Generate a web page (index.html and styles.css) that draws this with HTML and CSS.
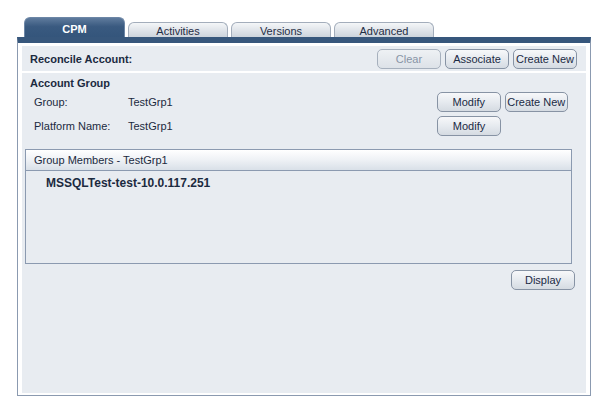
FILE: index.html
```html
<!DOCTYPE html>
<html lang="en">
<head>
  <meta charset="UTF-8" />
  <title>CPM</title>
  <link rel="stylesheet" href="styles.css">
</head>
<body>
  <div class="tabs">
    <div class="tab active">CPM</div>
    <div class="tab">Activities</div>
    <div class="tab">Versions</div>
    <div class="tab">Advanced</div>
  </div>

  <div class="frame">
    <!-- Reconcile row -->
    <div class="reconcile">
      <span class="title">Reconcile Account:</span>
      <div class="btns">
        <button class="btn" disabled>Clear</button>
        <button class="btn">Associate</button>
        <button class="btn">Create New</button>
      </div>
    </div>

    <!-- Account group -->
    <div class="group-panel">
      <div class="title">Account Group</div>
      <div class="field">
        <span class="label">Group:</span>
        <span class="value">TestGrp1</span>
        <div class="field-btns">
          <button class="btn">Modify</button>
          <button class="btn">Create New</button>
        </div>
      </div>
      <div class="field">
        <span class="label">Platform Name:</span>
        <span class="value">TestGrp1</span>
        <div class="field-btns">
          <button class="btn">Modify</button>
        </div>
      </div>

      <div class="members">
        <div class="members-head">Group Members - TestGrp1</div>
        <div class="members-body">
          <div class="member">MSSQLTest-test-10.0.117.251</div>
        </div>
      </div>

      <div class="display-row">
        <button class="btn">Display</button>
      </div>
    </div>
  </div>
</body>
</html>
```

FILE: styles.css
```css
body {
  margin: 0;
  background: #fff;
  font-family: "Liberation Sans", Arial, sans-serif;
  font-size: 11px;
  color: #1b2a40;
}
.tabs {
  display: flex;
  align-items: flex-end;
  gap: 3px;
  padding: 17px 0 0 24px;
  height: 20px;
}
.tab {
  width: 98px;
  height: 14px;
  line-height: 17px;
  text-align: center;
  border: 1px solid #a3adbb;
  border-bottom: none;
  border-radius: 6px 6px 0 0;
  background: linear-gradient(#f4f6f8, #cdd4dc);
  color: #1f2d44;
}
.tab.active {
  width: 99px;
  height: 19px;
  line-height: 23px;
  border-color: #6c86a6;
  background: linear-gradient(#5f7b9d, #3a5a80 45%, #34557b);
  color: #fff;
  font-weight: bold;
}
.frame {
  width: 564px;
  margin-left: 17px;
  border: 1px solid #8b9ab0;
  border-top: 6px solid #37577c;
  padding: 3px 4px 2px;
  height: 347px;
  display: flex;
  flex-direction: column;
}
.title {
  font-weight: bold;
}
.reconcile {
  height: 25px;
  background: #e8ecf1;
  display: flex;
  align-items: center;
  justify-content: space-between;
  padding: 0 9px 0 8px;
}
.btns {
  display: flex;
  gap: 4px;
}
.btn {
  width: 64px;
  height: 20px;
  padding: 0;
  font-family: inherit;
  font-size: 11px;
  color: #1b2a44;
  border: 1px solid #8793a4;
  border-radius: 5px;
  background: linear-gradient(#f7f8fa, #e6eaef 50%, #d5dbe2);
}
.btn:disabled {
  color: #8894a6;
  border-color: #a6b0bd;
  background: linear-gradient(#eef1f4, #dde2e8);
}
.group-panel {
  flex: 1;
  margin-top: 2px;
  background: #e8ecf1;
  padding: 3px 0 0;
}
.group-panel > .title {
  padding-left: 8px;
  line-height: 14px;
}
.field {
  display: flex;
  align-items: center;
  height: 24px;
  padding-left: 12px;
}
.field:first-of-type {
  margin-top: 3px;
}
.label {
  width: 94px;
}
.value {
  flex: 1;
}
.field-btns {
  display: flex;
  gap: 4px;
  width: 131px;
  margin-right: 18px;
}
.members {
  margin: 11px 14px 0 3px;
  border: 1px solid #8b9ab0;
  height: 113px;
  background: #e8ecf1;
}
.members-head {
  height: 20px;
  line-height: 20px;
  padding-left: 8px;
  border-bottom: 1px solid #8b9ab0;
  background: linear-gradient(#ffffff, #eef1f5 50%, #d9e0e8);
}
.member {
  font-weight: bold;
  font-size: 12px;
  padding: 5px 0 0 20px;
}
.display-row {
  display: flex;
  justify-content: flex-end;
  padding: 6px 11px 0 0;
}
```
